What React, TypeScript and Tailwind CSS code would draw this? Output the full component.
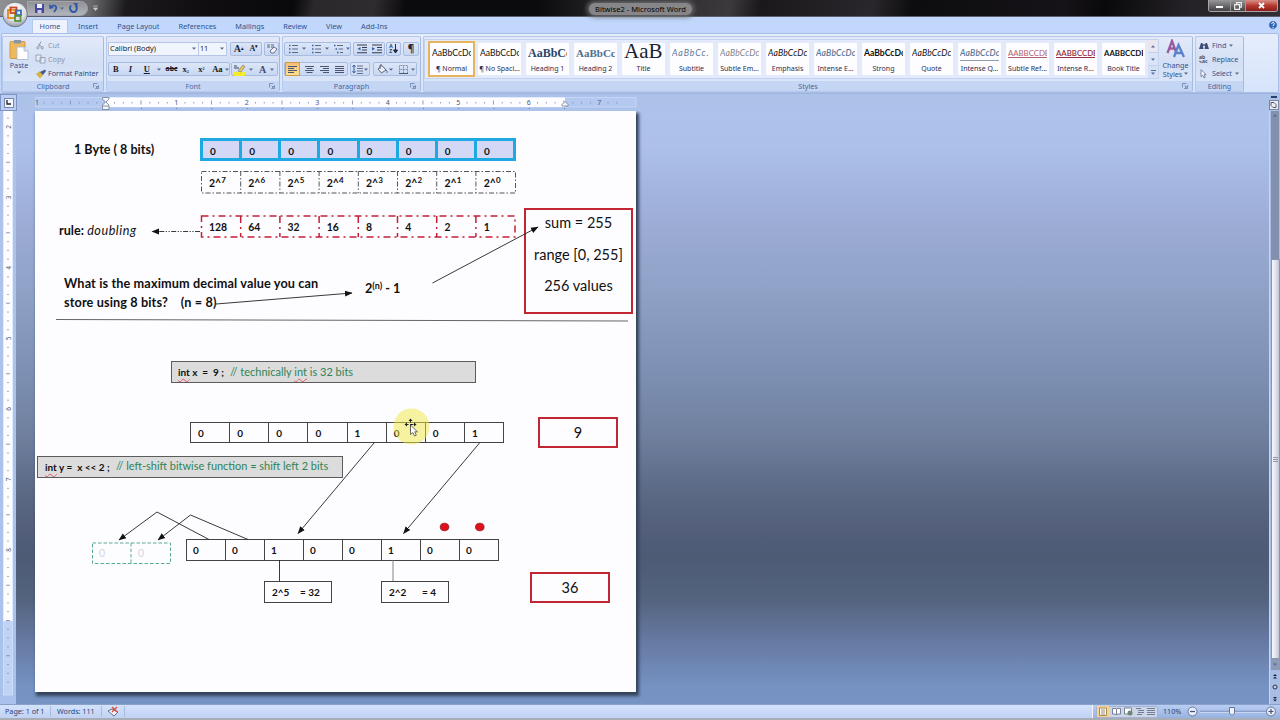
import React from "react";

interface TileProps {
  preview: string;
  name: string;
  look: string;
  selected?: boolean;
}

const tabs = ["Insert", "Page Layout", "References", "Mailings", "Review", "View", "Add-Ins"];

const tiles: TileProps[] = [
  { preview: "AaBbCcDc", name: "¶ Normal", look: "text-[8.6px]", selected: true },
  { preview: "AaBbCcDc", name: "¶ No Spaci...", look: "text-[8.6px]" },
  { preview: "AaBbCc", name: "Heading 1", look: "font-['Liberation_Serif',serif] text-[12px] font-bold text-[#2c4766]" },
  { preview: "AaBbCc", name: "Heading 2", look: "font-['Liberation_Serif',serif] text-[11px] font-bold text-[#506e8c]" },
  { preview: "AaB", name: "Title", look: "-mt-[5px] font-['Liberation_Serif',serif] text-[21px] text-[#1a2233]" },
  { preview: "AaBbCc.", name: "Subtitle", look: "text-[8.8px] italic tracking-[0.9px] text-[#60789a]" },
  { preview: "AaBbCcDc", name: "Subtle Em...", look: "text-[8.6px] italic tracking-[0.15px] text-[#848488]" },
  { preview: "AaBbCcDc", name: "Emphasis", look: "text-[8.6px] italic tracking-[0.15px] text-[#111]" },
  { preview: "AaBbCcDc", name: "Intense E...", look: "text-[8.6px] italic tracking-[0.15px] font-semibold text-[#5b7896]" },
  { preview: "AaBbCcDc", name: "Strong", look: "text-[8.6px] font-bold" },
  { preview: "AaBbCcDc", name: "Quote", look: "text-[8.6px] italic tracking-[0.15px] text-[#111]" },
  { preview: "AaBbCcDc", name: "Intense Q...", look: "text-[8.6px] italic tracking-[0.15px] font-semibold text-[#5b7896] border-b border-[#8c9eb4]" },
  { preview: "AABBCCDE", name: "Subtle Ref...", look: "text-[7.8px] text-[#b0606c] underline" },
  { preview: "AABBCCDE", name: "Intense R...", look: "text-[7.8px] font-semibold text-[#96303f] underline" },
  { preview: "AABBCCDE", name: "Book Title", look: "text-[7.8px] font-bold" },
];

function Caret({ className = "" }: { className?: string }) {
  return (
    <svg className={`shrink-0 ${className}`} width="4" height="3" viewBox="0 0 4 3">
      <path d="M0 .5h4L2 2.7z" fill="#566a90" />
    </svg>
  );
}

function Launcher() {
  return (
    <svg className="absolute right-[4px] top-[2px]" width="6" height="6" viewBox="0 0 6 6">
      <path d="M.5 4.5v-4h4M2.5 2.5l2 2M5.5 2.5v3h-3z" fill="none" stroke="#6a80a8" strokeWidth=".8" />
    </svg>
  );
}

function Group({ title, width, children, launcher = true }: { title: string; width: string; children: React.ReactNode; launcher?: boolean }) {
  return (
    <section className={`flex h-[56px] shrink-0 flex-col overflow-hidden rounded-[2px] border border-[#b4c8ea] border-r-[#a6bade] bg-linear-to-b from-[#e3e9fa] via-[#d3dff5] to-[#dfe8fa] ${width}`}>
      <div className="flex h-[44px] shrink-0">{children}</div>
      <div className="relative h-[11px] bg-[#c4d6f4] text-center leading-[10px] text-[#4a66a0]">
        {title}
        {launcher && <Launcher />}
      </div>
    </section>
  );
}

const strip = "flex h-[14px] items-center rounded-[2px] border border-[#a8bbe0] bg-linear-to-b from-[#dde6f8] to-[#c8d7f2]";

function Lines({ kind }: { kind: "left" | "center" | "right" | "full" }) {
  const paths = {
    left: "M1 1.5h9M1 3.5h6M1 5.5h9M1 7.5h6",
    center: "M1 1.5h9M2.5 3.5h6M1 5.5h9M2.5 7.5h6",
    right: "M1 1.5h9M4 3.5h6M1 5.5h9M4 7.5h6",
    full: "M1 1.5h9M1 3.5h9M1 5.5h9M1 7.5h9",
  };
  return (
    <svg width="11" height="9" viewBox="0 0 11 9">
      <path d={paths[kind]} stroke="#4a5570" strokeWidth="1" />
    </svg>
  );
}

function ListIcon({ step = 0 }: { step?: number }) {
  return (
    <svg width="11" height="10" viewBox="0 0 11 10">
      <path d={`M4 1.5h6M${4 + step} 5h${6 - step}M${4 + step * 2} 8.5h${6 - step * 2}`} stroke="#5e6a84" />
      <path d={`M1 1.5h1.5M${1 + step} 5h1.5M${1 + step * 2} 8.5h1.5`} stroke="#3a62a8" strokeWidth="1.6" />
    </svg>
  );
}

function IndentIcon({ flip }: { flip?: boolean }) {
  return (
    <svg width="12" height="10" viewBox="0 0 12 10">
      <path d="M1 1h10M6 3.5h5M6 6h5M1 8.8h10" stroke="#333c50" strokeWidth="1.1" />
      <path d={flip ? "M1 3l3 1.8L1 6.6z" : "M4.5 3l-3 1.8 3 1.8z"} fill="#3a62a8" />
    </svg>
  );
}

function TitleBar() {
  return (
    <header className="relative flex h-[17px] items-center border-b border-[#5b606c] bg-[linear-gradient(100deg,#8f9092_0,#6a6a6c_90px,#1c1a1d_125px,#100e11_200px,#09080a_290px,#2a282b_310px,#2f2c30_370px,#0b0a0c_400px,#0b0a0c_530px,#262427_600px,#3c393d_720px,#1a181b_750px,#29272b_860px,#0d0c0f_900px,#151317_1050px,#09080a_1090px,#242226_1170px,#343236_1280px)]">
      <div className="ml-[27px] flex h-[15px] w-[61px] items-center rounded-r-full border border-[#a4a6ac] bg-linear-to-b from-[#909297] to-[#b2b5bb] pl-[6px]">
        <svg width="11" height="11" viewBox="0 0 11 11">
          <path d="M1 1h9v9H1z" fill="#4a47a0" />
          <path d="M3 1h5v4H3z" fill="#eceefb" />
          <path d="M3.5 7h4v3h-4z" fill="#c8cbe6" />
        </svg>
        <svg className="ml-[4px]" width="9" height="10" viewBox="0 0 9 10">
          <path d="M2 4c3-3 6-1 5 2L5 9" fill="none" stroke="#2f58a8" strokeWidth="1.7" />
          <path d="M0 1l.5 5L5 5z" fill="#2f58a8" />
        </svg>
        <Caret className="ml-[2px]" />
        <svg className="ml-[5px]" width="9" height="10" viewBox="0 0 9 10">
          <path d="M2 2.5C0 5 1.5 9 4.5 9S9 5 6.500 2.500" fill="none" stroke="#2f58a8" strokeWidth="1.9" />
          <path d="M4 0h4.500v4.500z" fill="#2f58a8" />
        </svg>
      </div>
      <svg className="ml-[5px]" width="5" height="6" viewBox="0 0 5 6">
        <path d="M0 1h5M.5 3h4L2.5 5.5z" stroke="#c8cad4" strokeWidth=".7" fill="#c8cad4" />
      </svg>
      <div className="absolute left-[589px] top-[3px] w-[103px] rounded-full bg-[#868688] text-center text-[7.6px] leading-[12px] text-black shadow-[0_0_5px_2px_#6c6c6e]">
        Bitwise2 - Microsoft Word
      </div>
      <div className="absolute right-[2px] top-0 flex h-[12px] overflow-hidden rounded-b-[3px] border border-t-0 border-[#aaa4a6]">
        <div className="flex w-[22px] items-center justify-center border-r border-[#999] bg-linear-to-b from-[#98989a] to-[#434345]">
          <svg width="7" height="7" viewBox="0 0 7 7"><path d="M0 4h7v2H0z" fill="#fff" /></svg>
        </div>
        <div className="flex w-[15px] items-center justify-center border-r border-[#999] bg-linear-to-b from-[#98989a] to-[#434345]">
          <svg width="8" height="8" viewBox="0 0 8 8">
            <path d="M2.5 2V.7h4.8v4.5H6M.7 2.6h4.8v4.700H.7z" fill="none" stroke="#eee" strokeWidth="1.2" />
          </svg>
        </div>
        <div className="flex w-[31px] items-center justify-center bg-linear-to-b from-[#d89088] via-[#b53a32] to-[#8c1c18]">
          <svg width="7" height="7" viewBox="0 0 7 7"><path d="M1 1l5 5M6 1L1 6" stroke="#fff" strokeWidth="1.8" /></svg>
        </div>
      </div>
      <svg className="absolute left-[2px] top-[1px] z-10" width="26" height="27" viewBox="0 0 26 27">
        <defs>
          <radialGradient id="orb" cx="50%" cy="30%" r="70%">
            <stop offset="0" stopColor="#fff" />
            <stop offset=".65" stopColor="#dcdde4" />
            <stop offset="1" stopColor="#9297a8" />
          </radialGradient>
        </defs>
        <circle cx="13" cy="13.5" r="12.3" fill="url(#orb)" stroke="#6c7080" strokeWidth=".8" />
        <g fill="none" strokeWidth="1.8">
          <rect x="6" y="9" width="7" height="8" stroke="#e08a1e" />
          <rect x="8.5" y="6.5" width="6" height="5.5" stroke="#c8481e" />
          <rect x="14" y="9.5" width="5" height="4.5" stroke="#3a70b8" />
          <rect x="13" y="15" width="5.5" height="5" stroke="#5c9440" />
        </g>
      </svg>
    </header>
  );
}

function Tabs() {
  return (
    <nav className="flex h-[16px] items-center bg-[#c1d7fb] text-[7.3px] text-[#33538e]">
      <div className="ml-[32px] mt-[2px] h-[14px] w-[36px] rounded-t-[2px] border border-b-0 border-[#b5c8ea] bg-[#edf2fd] text-center leading-[13px]">Home</div>
      <div className="ml-[10px] mt-[2px] flex gap-[19px] leading-[12px]">
        {tabs.map((t) => (
          <span key={t} className="whitespace-nowrap">{t}</span>
        ))}
      </div>
      <svg className="ml-auto mr-[2px]" width="10" height="10" viewBox="0 0 10 10">
        <circle cx="5" cy="5" r="4.3" fill="#2f66b8" stroke="#cfe0f8" strokeWidth=".8" />
        <path d="M3.7 4c0-2 2.7-1.8 2.7-.2C6.4 4.8 5 4.8 5 6M5 7v1" fill="none" stroke="#fff" />
      </svg>
    </nav>
  );
}

function Clipboard() {
  return (
    <Group title="Clipboard" width="w-[102px]">
      <div className="flex w-[32px] flex-col items-center pt-[2px] text-[#33538e]">
        <svg width="20" height="21" viewBox="0 0 20 21">
          <rect x="1" y="2.5" width="15" height="17" rx="1" fill="#edb95c" stroke="#cf9a44" />
          <path d="M5 1h7v3.5H5z" fill="#8b95a8" />
          <path d="M8 8h7l4 4v8.5H8z" fill="#fff" stroke="#a6b4cf" strokeWidth=".8" />
          <path d="M15 8v4h4" fill="#dbe4f4" stroke="#a6b4cf" strokeWidth=".8" />
        </svg>
        <span className="leading-[10px]">Paste</span>
        <Caret className="mt-[1px]" />
      </div>
      <div className="flex flex-col pt-[1px] text-[#8b95a9]">
        <div className="flex h-[14.5px] items-center gap-[4px]">
          <svg className="ml-[1px]" width="8" height="9" viewBox="0 0 9 9">
            <path d="M5.5 0L3 6M2.5 3l4 3" stroke="#8993a8" />
            <circle cx="2" cy="7" r="1.3" fill="none" stroke="#8993a8" /><circle cx="7" cy="7" r="1.3" fill="none" stroke="#8993a8" />
          </svg>
          Cut
        </div>
        <div className="flex h-[14.5px] items-center gap-[2px]">
          <svg width="11" height="10" viewBox="0 0 11 10">
            <path d="M1 1h5v6H1zM5 3.5h5V9H5z" fill="#e6ebf6" stroke="#98a3ba" />
          </svg>
          Copy
        </div>
        <div className="flex h-[14.5px] items-center gap-[1px] text-[#2f4878]">
          <svg width="12" height="10" viewBox="0 0 12 10">
            <path d="M1 5l4-3 3 4-3 3.5z" fill="#d5b23c" />
            <path d="M5 3l5-2.500L11 2 8 6z" fill="#435a8c" />
          </svg>
          <span className="whitespace-nowrap">Format Painter</span>
        </div>
      </div>
    </Group>
  );
}

function FontGroup() {
  return (
    <Group title="Font" width="w-[174px]">
      <div className="flex flex-col gap-[6px] pl-[1px] pt-[4px]">
        <div className="flex h-[15px] items-center">
          <div className="flex h-[14px] w-[91px] items-center justify-between border border-[#b6c6e4] bg-[#f0f4fd] pl-[1px] pr-[2px] text-[7.4px] text-[#222]">
            Calibri (Body)<Caret />
          </div>
          <div className="flex h-[14px] w-[28px] items-center justify-between border border-l-0 border-[#b6c6e4] bg-[#f0f4fd] pl-[1px] pr-[2px] text-[#222]">
            11<Caret />
          </div>
          <div className={`${strip} ml-[3px] w-[32px] justify-around font-['Liberation_Serif',serif] font-bold text-[#20283c]`}>
            <span className="text-[10px]">A<sup className="text-[5px]">▴</sup></span>
            <span className="text-[8px]">A<sup className="text-[5px]">▾</sup></span>
          </div>
          <div className={`${strip} ml-[2px] w-[15px] justify-center`}>
            <svg width="12" height="11" viewBox="0 0 12 11">
              <path d="M1 4h7M1 2h7" stroke="#5a6580" strokeDasharray="3 1" />
              <path d="M4 8l4-4 3 2-3 4H5z" fill="#eef1f8" stroke="#6a7388" />
            </svg>
          </div>
        </div>
        <div className="flex">
          <div className={`${strip} w-[122px] pl-[4px] font-['Liberation_Serif',serif] text-[8.5px] font-bold text-[#151a28]`}>
            <span className="w-[16px]">B</span>
            <span className="w-[15px] italic">I</span>
            <span className="w-[13px] underline">U</span>
            <Caret />
            <span className="ml-[5px] w-[17px] font-sans text-[6.8px] line-through">abc</span>
            <span className="w-[16px]">x<sub className="text-[4px]">2</sub></span>
            <span className="w-[14px]">x<sup className="text-[4px]">2</sup></span>
            <span className="w-[13px]">Aa</span>
            <Caret />
          </div>
          <div className={`${strip} ml-[1px] w-[47px] pl-[2px]`}>
            <svg width="12" height="13" viewBox="0 0 12 13">
              <path d="M0 9h11v4H0z" fill="#f4ec2a" />
              <path d="M4 8l5-6 2 1.5-4 5.5z" fill="#e8c85a" stroke="#78705a" strokeWidth=".6" />
              <path d="M0 5h5M0 3h3" stroke="#3a445c" />
            </svg>
            <Caret className="ml-[3px]" />
            <span className="ml-[6px] w-[11px] font-['Liberation_Serif',serif] text-[10px] font-bold text-[#3e4d75]">A</span>
            <Caret />
          </div>
        </div>
      </div>
    </Group>
  );
}

function ParagraphGroup() {
  return (
    <Group title="Paragraph" width="w-[139px]">
      <div className="flex flex-col gap-[6px] pl-[1px] pt-[4px]">
        <div className="flex h-[15px] items-center">
          <div className={`${strip} w-[67px] pl-[3px]`}>
            <ListIcon /><Caret className="ml-[3px]" />
            <span className="w-[5px]" /><ListIcon /><Caret className="ml-[3px]" />
            <span className="w-[4px]" /><ListIcon step={1.5} /><Caret className="ml-[2px]" />
          </div>
          <div className={`${strip} ml-[2px] w-[32px] justify-around`}><IndentIcon /><IndentIcon flip /></div>
          <div className={`${strip} ml-[1px] w-[15px] justify-center`}>
            <span className="text-[5px] font-bold leading-[5px] text-[#33415f]">A<br />Z</span>
            <svg width="5" height="10" viewBox="0 0 5 10"><path d="M2.5 0v8M.5 6l2 3 2-3z" stroke="#20283c" fill="#20283c" /></svg>
          </div>
          <div className={`${strip} ml-[2px] w-[16px] justify-center text-[10px] font-bold text-[#20283c]`}>¶</div>
        </div>
        <div className="flex">
          <div className={`${strip} w-[64px] justify-between pr-[2px]`}>
            <span className="flex h-[14px] w-[15px] items-center justify-center border border-[#d29a48] bg-linear-to-b from-[#f6bd77] to-[#fde08e]"><Lines kind="left" /></span>
            <Lines kind="center" /><Lines kind="right" /><Lines kind="full" />
          </div>
          <div className={`${strip} ml-[2px] w-[20px] justify-center gap-[1px]`}>
            <svg width="4" height="10" viewBox="0 0 4 10"><path d="M2 1v8M.5 3L2 1l1.5 2M.5 7L2 9l1.5-2" stroke="#3a62a8" fill="none" /></svg>
            <svg width="6" height="9" viewBox="0 0 6 9"><path d="M0 1h6M0 3.5h6M0 6h6M0 8.5h6" stroke="#66728c" /></svg>
            <Caret />
          </div>
          <div className={`${strip} ml-[3px] w-[44px] pl-[2px]`}>
            <svg width="12" height="11" viewBox="0 0 12 11">
              <path d="M2 5l4-3.5L10 6l-4.500 3z" fill="#e9ecf4" stroke="#5c667c" />
              <path d="M4 5V1h2M10 6c1.5 1 1.2 3 .5 3" fill="none" stroke="#5c667c" />
            </svg>
            <Caret className="ml-[1px]" />
            <svg className="ml-[6px]" width="9" height="9" viewBox="0 0 9 9">
              <path d="M.5.5h8v8h-8zM4.5.5v8M.5 4.5h8" fill="none" stroke="#7884a0" strokeDasharray="1 .6" /><path d="M0 8.500h9" stroke="#4a566e" />
            </svg>
            <Caret className="ml-[3px]" />
          </div>
        </div>
      </div>
    </Group>
  );
}

function Tile({ preview, name, look, selected }: TileProps) {
  return (
    <div className={`flex h-[32px] w-[43px] shrink-0 flex-col overflow-hidden bg-[#fdfdff] ${selected ? "outline-2 outline-[#e6b45c]" : ""}`}>
      <div className="flex h-[20px] items-center overflow-hidden px-[2px]">
        <span className={`w-[39px] overflow-hidden whitespace-nowrap font-['Lato',sans-serif] leading-[20px] ${look} ${look.includes("border-b") ? "mt-[1px] !leading-[14px]" : ""}`}>{preview}</span>
      </div>
      <div className="whitespace-nowrap text-center text-[7px] leading-[11px] text-[#2c2c50]">{name}</div>
    </div>
  );
}

function StylesGroup() {
  return (
    <Group title="Styles" width="w-[770px]">
      <div className="mt-[2px] flex h-[40px] w-[735px] items-center border border-[#c3d2ee] bg-[#e3eafb] pl-[5px] text-[#111]">
        <div className="flex gap-[5px]">
          {tiles.map((t) => <Tile key={t.name} {...t} />)}
        </div>
        <div className="ml-[3px] flex h-[38px] w-[10px] flex-col">
          <div className="flex flex-1 items-center justify-center bg-[#eae6f0]"><Caret className="rotate-180" /></div>
          <div className="flex flex-1 items-center justify-center border-y border-[#c3d2ee] bg-[#d9e4f8]"><Caret /></div>
          <div className="flex flex-1 flex-col items-center justify-center bg-[#d4e0f6]"><span className="mb-[1px] h-px w-[5px] bg-[#566a90]" /><Caret /></div>
        </div>
      </div>
      <div className="flex flex-1 flex-col items-center pt-[2px] leading-[8.5px] text-[#33538e]">
        <svg width="20" height="20" viewBox="0 0 20 20">
          <g fill="none" strokeWidth="2.3">
            <path d="M1.5 14L6 2l4 11M3 9.5h6" stroke="#9a5a9c" />
            <path d="M8 18l4.5-12L18 18M10 14h6" stroke="#5a82cc" />
          </g>
        </svg>
        <span className="mt-[2px]">Change</span>
        <span className="flex items-center gap-[2px]">Styles<Caret /></span>
      </div>
    </Group>
  );
}

function EditingGroup() {
  return (
    <Group title="Editing" width="w-[49px]" launcher={false}>
      <div className="flex flex-col pl-[3px] pt-[1px] text-[#33538e]">
        <div className="flex h-[14.5px] items-center gap-[3px]">
          <svg width="10" height="9" viewBox="0 0 10 9">
            <path d="M0 8l2-6h1.5L4.5 8zM5.5 8l1-6H8l2 6z" fill="#3c4c74" /><path d="M3 4h4" stroke="#3c4c74" strokeWidth="1.5" />
          </svg>
          Find<Caret />
        </div>
        <div className="flex h-[14.5px] items-center gap-[2px]">
          <span className="w-[11px] text-[5px] font-bold leading-[4.5px] text-[#44506c]">ab<br />⤷ac</span>
          Replace
        </div>
        <div className="flex h-[14.5px] items-center gap-[3px]">
          <svg width="10" height="10" viewBox="0 0 10 10">
            <path d="M2 .7v7l1.7-1.5L5 9l1.3-.6L5 5.700h2.200z" fill="#fff" stroke="#60708f" strokeWidth=".8" />
          </svg>
          Select<Caret />
        </div>
      </div>
    </Group>
  );
}

function Ribbon() {
  return (
    <div className="mx-[1px] flex h-[60px] gap-[2px] rounded-[2px] border border-[#a8bee6] bg-linear-to-b from-[#e6edfc] to-[#d6e4fb] pt-[2px] text-[7.2px]">
      <Clipboard />
      <FontGroup />
      <ParagraphGroup />
      <StylesGroup />
      <EditingGroup />
    </div>
  );
}

// one inch on the ruler
const INCH = 70.5;

function HorizontalRuler() {
  return (
    <div className="flex h-[17px] items-center bg-[#adc2e9]">
      <div className="flex h-[17px] w-[17px] items-center justify-center border border-[#7d94c4] bg-[#bccff0]">
        <div className="flex h-[10px] w-[10px] items-center justify-center border border-[#7488b4] bg-[#f4f7fd]">
          <svg width="5" height="5" viewBox="0 0 5 5"><path d="M1 0v4h4" fill="none" stroke="#222" strokeWidth="1.3" /></svg>
        </div>
      </div>
      <svg className="ml-[18px]" width="602" height="16" viewBox="35 95 602 16">
        <rect x="35" y="97.5" width="601" height="9.5" fill="#b4c9ef" stroke="#c9dafa" strokeWidth=".8" />
        <rect x="106" y="97.5" width="459" height="9.5" fill="#fdfdff" />
        {Array.from({ length: 69 }, (_, i) => i - 8).map((i) => {
          const x = 105.7 + (i * INCH) / 8;
          if (i === 0 || i > 58 || x < 37) return null;
          if (i % 8 === 0) return <text key={i} x={x} y="105" fontSize="7" textAnchor="middle" fill="#4c5878">{Math.abs(i / 8)}</text>;
          return <path key={i} d={i % 4 === 0 ? `M${x} 100.5v4` : `M${x} 102v1.5`} stroke="#8390ae" strokeWidth=".9" />;
        })}
        <text x="35" y="105" fontSize="7" fill="#4c5878">1</text>
        <path d="M102.5 97.5h6.5v1.5l-3 3 3 3v4.500h-6.500V105l3-3-3-3zM102.500 106h6.500" fill="#f4f5fa" stroke="#727b90" strokeWidth=".8" />
        <path d="M562 106v-1.5l3-3 3 3v1.5z" fill="#f4f5fa" stroke="#727b90" strokeWidth=".8" />
        <path d="M141 108.5h424" stroke="#5f76a6" strokeWidth="1.2" strokeDasharray=".9 34.35" />
      </svg>
      <div className="ml-auto mr-[1px] flex h-[17px] w-[10px] flex-col items-center pt-[2px]">
        <div className="h-[2px] w-[6px] bg-[#28406c]" />
        <svg className="mt-[2px]" width="10" height="10" viewBox="0 0 10 10">
          <rect x=".5" y=".5" width="9" height="9" fill="#eceef4" stroke="#7a849a" />
          <path d="M2 2.5h3l2 2v3H4L2 5.5z" fill="none" stroke="#4c5872" />
        </svg>
      </div>
    </div>
  );
}

function VerticalRuler() {
  return (
    <div className="flex w-[16px] shrink-0 justify-center bg-linear-to-b from-[#aec4ec] to-[#a9c1ec]">
      <svg width="16" height="593" viewBox="0 111 16 593">
        <rect x="3.5" y="111" width="9" height="584" fill="#c1d3f4" stroke="#d2e1fb" strokeWidth=".8" />
        <rect x="3.5" y="111" width="9" height="510" fill="#fdfdff" />
        {Array.from({ length: 66 }, (_, i) => i - 1).map((i) => {
          const y = 127 + (i * INCH) / 8;
          if (y > 690) return null;
          if (i % 8 === 0 && i < 56 && i >= 0)
            return <text key={i} x="0" y="0" transform={`translate(10.5 ${y}) rotate(-90)`} fontSize="6.5" textAnchor="middle" fill="#56627e">{2 + i / 8}</text>;
          return <path key={i} d={i % 4 === 0 ? `M6 ${y}h4` : `M7.2 ${y}h1.6`} stroke="#8390ae" strokeWidth=".9" />;
        })}
      </svg>
    </div>
  );
}

function Bits({ values, className, cell }: { values: React.ReactNode[]; className: string; cell: string }) {
  return (
    <div className={`absolute grid grid-cols-8 font-bold ${className}`}>
      {values.map((v, i) => (
        <div key={i} className={`whitespace-nowrap ${cell}`}>{v}</div>
      ))}
    </div>
  );
}

function Squiggle({ children }: { children: React.ReactNode }) {
  return <span className="underline decoration-[#dd5560] decoration-wavy decoration-[0.6px] underline-offset-[1.5px]">{children}</span>;
}

function Page() {
  return (
    <article className="relative ml-[19px] h-[581px] w-[601px] shrink-0 whitespace-pre bg-[#fdfcff] font-['Lato','Liberation_Sans',sans-serif] text-[13px] leading-none text-[#111] shadow-[2px_3px_3px_1px_#35435c]">
      {/* byte and its place values */}
      <div className="absolute left-[39px] top-[33px] text-[12.6px] font-bold">1 Byte ( 8 bits)</div>
      <Bits
        values={["0", "0", "0", "0", "0", "0", "0", "0"]}
        className="left-[165px] top-[27px] h-[23px] w-[316px] border-y-3 border-l-3 border-[#1fa9e2] bg-[#d2d8f6] text-[10px]"
        cell="border-r-3 border-[#1fa9e2] pl-[7px] pt-[5px]"
      />
      <Bits
        values={[7, 6, 5, 4, 3, 2, 1, 0].map((n) => <>2^<sup className="text-[8px]">{n}</sup></>)}
        className="left-[166px] top-[61px] h-[22px] w-[314px] text-[10.5px]"
        cell="pl-[8px] pt-[6px]"
      />
      <Bits
        values={["128", "64", "32", "16", "8", "4", "2", "1"]}
        className="left-[166px] top-[104px] h-[22px] w-[314px] text-[10.4px]"
        cell="pl-[8px] pt-[7px]"
      />
      <div className="absolute left-[24px] top-[114px] text-[12.6px]"><b>rule:</b> <i className="tracking-[0.55px]">doubling</i></div>
      <div className="absolute left-[29px] top-[163px] text-[12.7px] font-bold leading-[18.5px] tracking-[0.12px]">
        What is the maximum decimal value you can{"\n"}store using 8 bits?    (n = 8)
      </div>
      <div className="absolute left-[330px] top-[171px] text-[12.7px] font-bold">2<sup className="text-[9px]">(n)</sup> - 1</div>
      <div className="absolute left-[489px] top-[97px] h-[106px] w-[109px] border-2 border-[#c02733] text-center text-[14.5px] leading-[31.7px]">
        <div className="-mt-[3px]">sum = 255</div>
        <div>range [0, 255]</div>
        <div>256 values</div>
      </div>

      {/* code lines */}
      <div className="absolute left-[136px] top-[250px] flex h-[22px] w-[305px] items-center border border-[#5c5c5c] bg-[#dcdcdc] pb-[1px] pl-[6px] text-[10px]">
        <b className="w-[52px]"><Squiggle>int</Squiggle> x  =  9 ;</b>
        <span className="text-[11px] text-[#2e8458]">// technically <Squiggle>int</Squiggle> is 32 bits</span>
      </div>
      <div className="absolute left-[2px] top-[345px] flex h-[22px] w-[306px] items-center border border-[#5c5c5c] bg-[#dcdcdc] pb-[1px] pl-[7px] text-[10px]">
        <b className="w-[71px]"><Squiggle>int</Squiggle> y =  x {"<<"} 2 ;</b>
        <span className="text-[10.95px] text-[#2e8458]">// left-shift bitwise function = shift left 2 bits</span>
      </div>

      {/* before and after the shift */}
      <Bits
        values={["0", "0", "0", "0", "1", "0", "0", "1"]}
        className="left-[155px] top-[311px] h-[21px] w-[314px] border-y border-r border-[#444] text-[10px]"
        cell="border-l border-[#444] pl-[7px] pt-[5px]"
      />
      <Bits
        values={["0", "0", "1", "0", "0", "1", "0", "0"]}
        className="left-[151px] top-[428px] h-[22px] w-[313px] border-y border-r border-[#444] text-[10px]"
        cell="border-l border-[#444] pl-[6px] pt-[5px]"
      />
      <div className="absolute left-[64px] top-[437px] flex gap-[33px] text-[10.5px] text-[#d4d6dc]"><span>0</span><span>0</span></div>
      <div className="absolute left-[503px] top-[306px] h-[31px] w-[80px] border-2 border-[#c02733] text-center text-[14.5px] leading-[27px]">9</div>
      <div className="absolute left-[495px] top-[461px] h-[31px] w-[80px] border-2 border-[#c02733] text-center text-[14.5px] leading-[27px]">36</div>
      <div className="absolute left-[229px] top-[470px] flex h-[22px] w-[68px] items-center border border-[#444] pl-[7px] text-[10px] font-bold">
        <span className="w-[28px]">2^5</span>= 32
      </div>
      <div className="absolute left-[346px] top-[470px] flex h-[22px] w-[68px] items-center border border-[#444] pl-[7px] text-[10px] font-bold">
        <span className="w-[33px]">2^2</span>= 4
      </div>

      <svg className="absolute left-0 top-0" width="601" height="581" viewBox="35 111 601 581" fill="none">
        <defs>
          <marker id="head" markerUnits="userSpaceOnUse" markerWidth="8" markerHeight="7" refX="7" refY="3.5" orient="auto">
            <path d="M0 .5L7.5 3.5 0 6.5z" fill="#111" />
          </marker>
        </defs>
        <g stroke="#555" strokeDasharray="5 2 1.5 2">
          <path d="M201.5 171.5h314v21.5h-314z" />
          {[1, 2, 3, 4, 5, 6, 7].map((i) => <path key={i} d={`M${201.5 + i * 39.2} 171v22`} />)}
        </g>
        <g stroke="#c21f38" strokeWidth="1.5" strokeDasharray="7 4 2 4">
          <path d="M201.5 216h313.5v21h-313.5z" />
          {[1, 2, 3, 4, 5, 6, 7].map((i) => <path key={i} d={`M${201.5 + i * 39.2} 216v21`} />)}
        </g>
        <g stroke="#222" strokeWidth=".9">
          <path d="M200 231.5h-48" strokeDasharray="5 1.5 1.2 1.5 1.2 1.5" markerEnd="url(#head)" />
          <path d="M216 304l136-11" markerEnd="url(#head)" />
          <path d="M432.5 283L538 227" markerEnd="url(#head)" />
          <path d="M374 443l-76 90.5" markerEnd="url(#head)" />
          <path d="M479.5 443l-76 90.5" markerEnd="url(#head)" />
          <path d="M209 539.5L157 512l-38 28" markerEnd="url(#head)" />
          <path d="M248 539.5L190.5 515 158 540" markerEnd="url(#head)" />
          <path d="M279.5 560v21" />
          <path d="M393 560v21" stroke="#777" />
        </g>
        <path d="M56 319.5l572 1.5" stroke="#666" />
        <path d="M92.5 543h78v20.5h-78zM131 543v20.5" stroke="#5aa898" strokeDasharray="3.5 2" />
        <ellipse cx="444.5" cy="527" rx="4.3" ry="3.8" fill="#e0101a" stroke="#7c1418" strokeWidth=".7" />
        <ellipse cx="479.8" cy="527" rx="4.3" ry="3.8" fill="#e0101a" stroke="#7c1418" strokeWidth=".7" />
        <circle cx="411.5" cy="426.5" r="18" fill="#f2e840" fillOpacity=".5" />
        {/* move pointer */}
        <path d="M410.5 419v12M405 424.5h11" stroke="#222" strokeDasharray="3.5 1.5" />
        <path d="M408.5 421l2-2.5 2 2.5zM407 422.5l-2.5 2 2.5 2zM414 422.5l2.5 2-2.5 2z" fill="#222" />
        <path d="M410.5 425v9.5l2.3-2 1.7 3.5 1.8-.8-1.6-3.4h2.8z" fill="#fff" stroke="#333" strokeWidth=".7" />
      </svg>
    </article>
  );
}

function ScrollBar() {
  return (
    <div className="flex w-[11px] shrink-0 flex-col items-center border-l border-[#c4d6f6] bg-[#a9bde4]">
      <div className="flex h-[148px] w-[8px] flex-col items-center bg-[#8290ad] pt-[3px]"><Caret className="rotate-180" /></div>
      <div className="flex h-[400px] w-[9px] flex-col items-center justify-center gap-[1px] border border-[#8b96ae] bg-linear-to-r from-[#f6f6fb] via-[#e2e4ee] to-[#c0c4d4]">
        <span className="h-px w-[5px] bg-[#8d95a8]" />
        <span className="h-px w-[5px] bg-[#8d95a8]" />
        <span className="h-px w-[5px] bg-[#8d95a8]" />
      </div>
      <div className="flex h-[11px] w-[9px] items-center justify-center bg-[#8c9ab8]"><Caret /></div>
      <svg width="10" height="34" viewBox="0 0 10 34">
        <path d="M3 6L5 4l2 2zM3 8.500L5 6.500l2 2zM3 27l2 2 2-2zM3 29.500l2 2 2-2z" fill="#182440" />
        <circle cx="5" cy="17" r="2" fill="#c8cedc" stroke="#182440" strokeWidth=".9" />
      </svg>
    </div>
  );
}

function StatusBar() {
  return (
    <footer className="flex h-[16px] shrink-0 flex-col">
      <div className="flex h-[14px] items-center border-t border-[#8ba0c8] bg-linear-to-b from-[#d4e2fb] to-[#c0d2f4] text-[7.2px] text-[#2c4170]">
        <span className="w-[51px] border-r border-[#a9bbdf] pl-[5px] leading-[11px]">Page: 1 of 1</span>
        <span className="w-[51px] border-r border-[#a9bbdf] pl-[6px] leading-[11px]">Words: 111</span>
        <svg className="ml-[5px]" width="12" height="11" viewBox="0 0 12 11">
          <path d="M1 5l4-2 6 3-4 4z" fill="#f0f3fa" stroke="#58637c" strokeWidth=".9" />
          <path d="M5 1l5 5M10 1L5 6" stroke="#dc4a3a" strokeWidth="1.3" />
        </svg>
        <span className="ml-[5px] h-[11px] w-px bg-[#a9bbdf]" />
        <div className="ml-auto flex h-[13px] w-[188px] items-center border-l border-[#f0f5ff] bg-linear-to-b from-[#b9cef4] to-[#98b2e0] pl-[3px]">
          <div className="flex h-[12px] w-[62px] items-center justify-between rounded-[2px] border border-[#a4b3ce] bg-[#ccd6e8] pr-[2px]">
            <svg width="12" height="11" viewBox="0 0 12 11"><path d="M0 0h12v11H0z" fill="#f9d48a" /><path d="M2.5 2h7v7.5h-7zM4 4h4M4 6h4M4 8h4" fill="#fff" stroke="#8c7044" strokeWidth=".8" /></svg>
            <svg width="9" height="9" viewBox="0 0 9 9"><path d="M.5 1.5h3.5l.5.5.5-.5h3.5V7H5.5l-1 1-1-1h-3zM4.500 2v6" fill="#fff" stroke="#5c6880" strokeWidth=".8" /></svg>
            <svg width="9" height="9" viewBox="0 0 9 9"><path d="M.5 1h7v6h-7z" fill="#fff" stroke="#5c6880" strokeWidth=".8" /><circle cx="6" cy="6" r="2.5" fill="#6a8878" /></svg>
            <svg width="8" height="9" viewBox="0 0 8 9"><path d="M0 1.5h5M2 3.5h6M2 5.5h6M1 7.5h5" stroke="#68748c" strokeWidth=".9" /></svg>
            <svg width="8" height="9" viewBox="0 0 8 9"><path d="M0 1.5h8M0 3.5h8M0 5.5h8M0 7.5h8" stroke="#68748c" strokeWidth=".9" /></svg>
          </div>
          <span className="ml-[5px] w-[24px]">110%</span>
          <svg width="91" height="13" viewBox="1186 705 91 13">
            <path d="M1199 712h68" stroke="#e8effc" /><path d="M1199 711.300h68" stroke="#5c74a4" strokeWidth=".7" />
            <circle cx="1191.5" cy="711.5" r="4.5" fill="#e6ebf6" stroke="#5c6c90" strokeWidth=".9" />
            <path d="M1189 711.5h5" stroke="#44547c" strokeWidth="1.2" />
            <path d="M1228.5 707.5h5v5.5l-2.5 2.5-2.5-2.500z" fill="#eef2fa" stroke="#5c6c90" strokeWidth=".9" />
            <circle cx="1270" cy="711.5" r="4.5" fill="#e6ebf6" stroke="#5c6c90" strokeWidth=".9" />
            <path d="M1267.5 711.5h5M1270 709v5" stroke="#44547c" strokeWidth="1.2" />
          </svg>
        </div>
      </div>
      <div className="h-[2px] bg-[#a9adb6]" />
    </footer>
  );
}

export default function App() {
  return (
    <div className="flex h-[720px] w-[1280px] flex-col overflow-hidden bg-[#c1d7fb] font-['Noto_Sans','Open_Sans',sans-serif] text-[7.2px]">
      <TitleBar />
      <Tabs />
      <Ribbon />
      <div className="h-px shrink-0 bg-[#9fb3dc]" />
      <HorizontalRuler />
      <main className="flex h-[593px] shrink-0 overflow-hidden bg-[linear-gradient(to_bottom,#aec2ec_0%,#acc0ea_6%,#9babd4_20%,#8da0c4_32%,#7c8fb2_45%,#6f7f9d_55%,#5f6e8a_62%,#535f7b_70%,#4d5b75_75%,#53627d_82%,#6578a0_89%,#7592c2_97%,#7693c4_100%)]">
        <VerticalRuler />
        <Page />
        <div className="flex-1" />
        <ScrollBar />
      </main>
      <StatusBar />
    </div>
  );
}
